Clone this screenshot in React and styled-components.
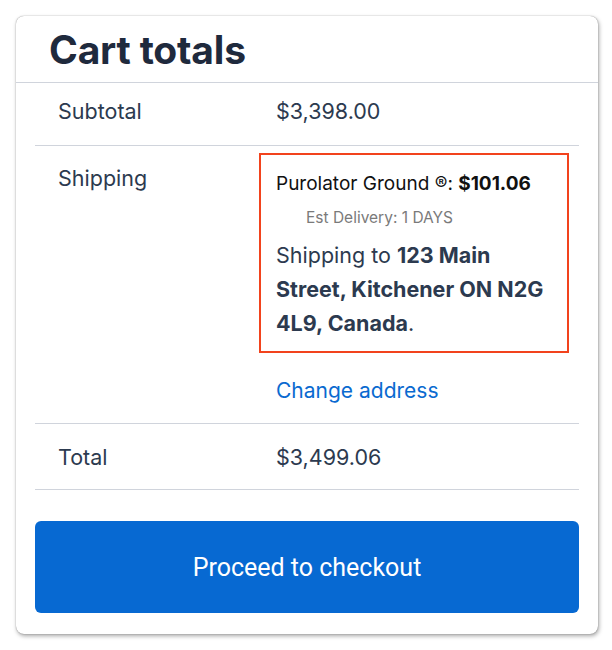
import styled, { createGlobalStyle } from "styled-components"

const GlobalStyle = createGlobalStyle`
body {
    margin: 0;
    padding: 16px 14px 16px 16px;
    background: #ffffff;
    font-family: Inter, "Noto Sans", sans-serif;
    color: #2c3a4f;
}
`

const Card = styled.div`
width: 582px;
box-sizing: border-box;
background: #fff;
border-radius: 8px;
box-shadow: 0 0 1px rgba(0,0,0,0.5), 1px 2px 4px rgba(0,0,0,0.35);
padding-bottom: 21px;
`

const Header = styled.div`
height: 67px;
box-sizing: border-box;
border-bottom: 1px solid #d0d4dc;
padding-left: 33px;
display: flex;
align-items: center;

& h2 {
    margin: 0;
    font-size: 39px;
    font-weight: 700;
    color: #1f2a3d;
    letter-spacing: -0.2px;
}
`

const Body = styled.div`
padding: 0 19px;
`

const Row = styled.div`
display: grid;
grid-template-columns: 241px 1fr;
border-bottom: 1px solid #d0d4dc;
padding: ${(p) => p.$pad || "18px 0"};
font-size: 21.5px;
line-height: 28px;
`

const Label = styled.div`
padding-left: 23px;
`

const Value = styled.div``

const ShippingBox = styled.div`
margin: -11px 10px 0 -17px;
border: 2px solid #f2431d;
padding: 17px 15px 11px 15px;
`

const Method = styled.div`
font-size: 19px;
line-height: 24px;
color: #111;

& b {
    font-weight: 700;
}
`

const Est = styled.div`
font-size: 15.5px;
line-height: 20px;
color: #7a7a7a;
padding-left: 30px;
margin: 12px 0 10px;
`

const Address = styled.p`
margin: 0;
font-size: 21.5px;
line-height: 34px;
color: #2c3a4f;

& b {
    font-weight: 700;
}
`

const ChangeLink = styled.a`
display: block;
width: max-content;
margin-top: 24px;
color: #0a6ad0;
text-decoration: none;
font-size: 21px;
`

const CheckoutButton = styled.button`
display: block;
margin: 31px 19px 0;
width: calc(100% - 38px);
height: 92px;
border: none;
border-radius: 6px;
background: #0769d2;
color: #fff;
font-family: Roboto, sans-serif;
font-size: 25px;
cursor: pointer;
`

export default function App() {
    return (
        <>
            <GlobalStyle />
            <Card>
                <Header>
                    <h2>Cart totals</h2>
                </Header>
                <Body>
                    <Row $pad="14px 0 20px">
                        <Label>Subtotal</Label>
                        <Value>$3,398.00</Value>
                    </Row>
                    <Row $pad="18px 0 18px">
                        <Label>Shipping</Label>
                        <Value>
                            <ShippingBox>
                                <Method>Purolator Ground ®: <b>$101.06</b></Method>
                                <Est>Est Delivery: 1 DAYS</Est>
                                <Address>
                                    Shipping to <b>123 Main Street, Kitchener ON N2G 4L9, Canada</b>.
                                </Address>
                            </ShippingBox>
                            <ChangeLink href="#">Change address</ChangeLink>
                        </Value>
                    </Row>
                    <Row $pad="19px 0 18px">
                        <Label>Total</Label>
                        <Value>$3,499.06</Value>
                    </Row>
                </Body>
                <CheckoutButton>Proceed to checkout</CheckoutButton>
            </Card>
        </>
    )
}
